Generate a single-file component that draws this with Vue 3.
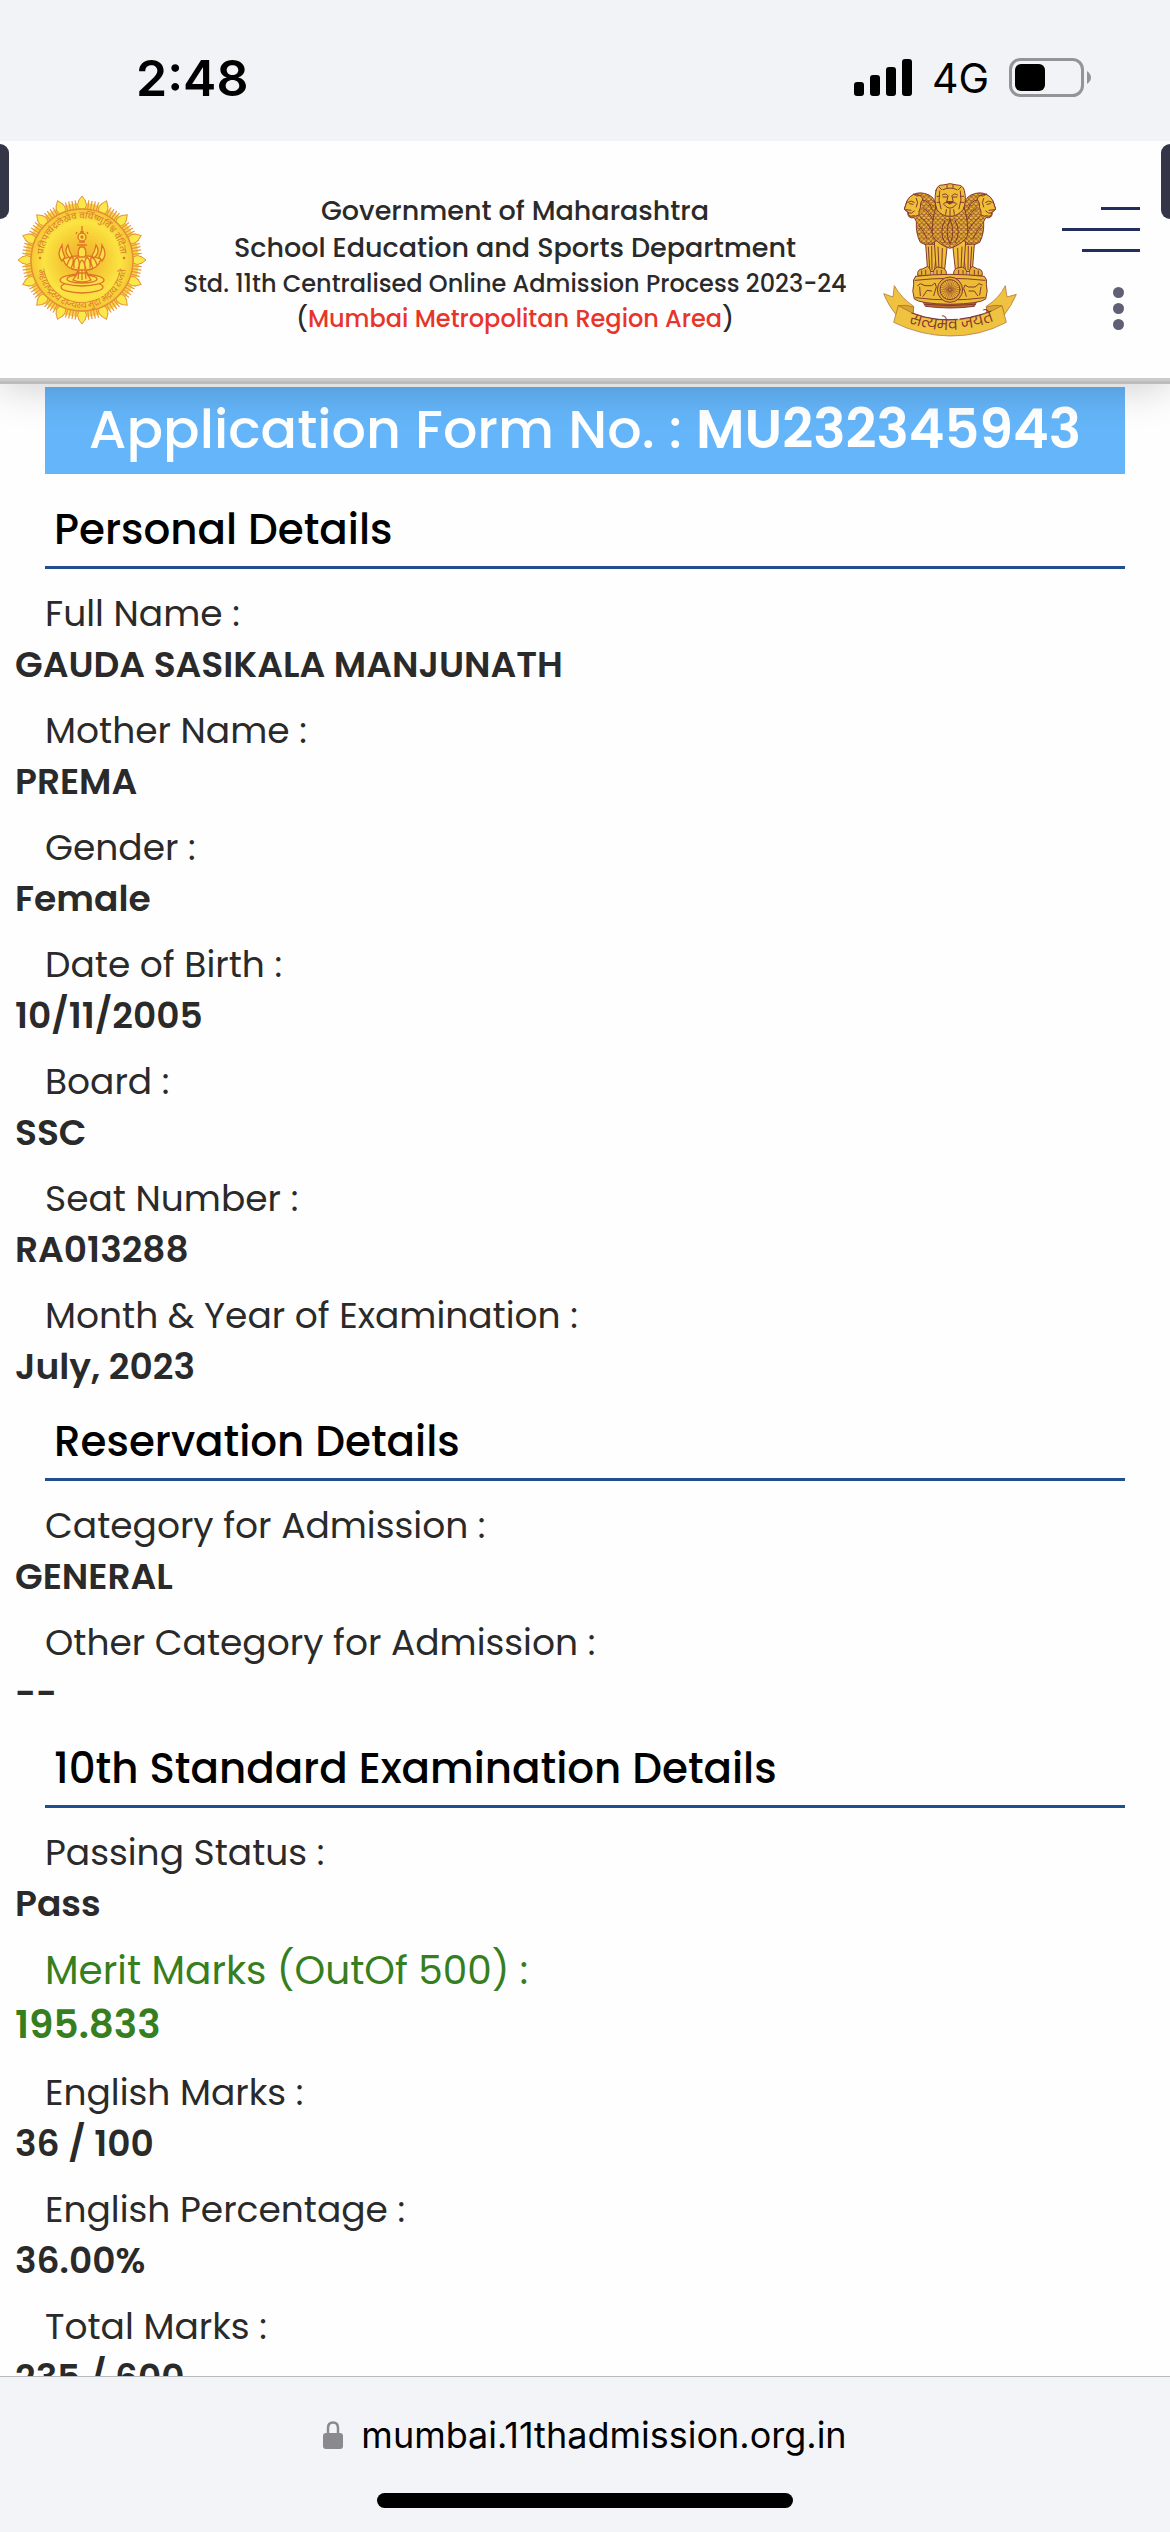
<script setup>
import { ref } from 'vue'

const applicationNo = ref('MU232345943')

// every block of the form with its label / value pairs
const sections = ref([
  {
    title: 'Personal Details',
    fields: [
      { label: 'Full Name', value: 'GAUDA SASIKALA MANJUNATH' },
      { label: 'Mother Name', value: 'PREMA' },
      { label: 'Gender', value: 'Female' },
      { label: 'Date of Birth', value: '10/11/2005' },
      { label: 'Board', value: 'SSC' },
      { label: 'Seat Number', value: 'RA013288' },
      { label: 'Month & Year of Examination', value: 'July, 2023' },
    ],
  },
  {
    title: 'Reservation Details',
    fields: [
      { label: 'Category for Admission', value: 'GENERAL' },
      { label: 'Other Category for Admission', value: '--' },
    ],
  },
  {
    title: '10th Standard Examination Details',
    fields: [
      { label: 'Passing Status', value: 'Pass' },
      { label: 'Merit Marks (OutOf 500)', value: '195.833', merit: true },
      { label: 'English Marks', value: '36 / 100' },
      { label: 'English Percentage', value: '36.00%' },
      { label: 'Total Marks', value: '235 / 600' },
    ],
  },
])

// angles for the petals and the rays of the state seal
const petals = Array.from({ length: 16 }, (_, i) => i * 22.5)
const rays = Array.from({ length: 112 }, (_, i) => (i * 360) / 112)
const spokes = Array.from({ length: 24 }, (_, i) => i * 15)
</script>

<template>
  <div class="phone">
    <div class="status-bar">
      <span class="clock">2:48</span>
      <div class="status-icons">
        <svg class="signal" viewBox="0 0 58 37">
          <rect x="0" y="23" width="10" height="14" rx="3" />
          <rect x="16" y="16" width="10" height="21" rx="3" />
          <rect x="32" y="8" width="10" height="29" rx="3" />
          <rect x="48" y="0" width="10" height="37" rx="3" />
        </svg>
        <span class="network">4G</span>
        <svg class="battery" viewBox="0 0 82 39">
          <rect x="1.5" y="1.5" width="72" height="36" rx="10" fill="none" stroke="#939498" stroke-width="3" />
          <rect x="6" y="6" width="30" height="27" rx="6" />
          <path d="M78 13 Q82 16 82 19.500 Q82 23 78 26 Z" fill="#939498" />
        </svg>
      </div>
    </div>

    <header>
      <div class="side-tab left"></div>
      <div class="side-tab right"></div>

      <svg class="seal" viewBox="-65 -65 130 130">
        <defs>
          <radialGradient id="seal-gold">
            <stop offset="0" stop-color="#efa92c" />
            <stop offset="0.45" stop-color="#f6cb35" />
            <stop offset="0.75" stop-color="#fbe442" />
            <stop offset="1" stop-color="#f6c733" />
          </radialGradient>
          <path id="seal-top" d="M-38.500 -3 A38.500 38.500 0 0 1 38.500 -3" />
          <path id="seal-bottom" d="M-44 4 A44 44 0 0 0 44 4" />
        </defs>
        <circle r="57" fill="#f8d544" />
        <path v-for="a in rays" :key="a" :transform="`rotate(${a})`" d="M0 -51 L0 -60" stroke="#e9963c" stroke-width="1.200" />
        <path
          v-for="a in petals"
          :key="'p' + a"
          :transform="`rotate(${a})`"
          d="M0 -64 L-3 -60 Q-6 -55 -3 -51 H3 Q6 -55 3 -60 Z"
          fill="#fbe84a"
          stroke="#e9963c"
        />
        <circle r="51" fill="url(#seal-gold)" stroke="#e58f35" stroke-width="1.500" />
        <g class="seal-text">
          <text><textPath href="#seal-top" startOffset="50%">प्रतिपच्चंद्रलेखेव वर्धिष्णुर्विश्व वंदिता</textPath></text>
          <text><textPath href="#seal-bottom" startOffset="50%">महाराष्ट्रस्य राज्यस्य मुद्रा भद्राय राजते</textPath></text>
        </g>
        <circle cx="-42" cy="-2" r="1.300" fill="#df7b2e" />
        <circle cx="42" cy="-2" r="1.300" fill="#df7b2e" />
        <g fill="#fbe04a" stroke="#df7425" stroke-width="1.300">
          <ellipse cy="27" rx="21" ry="6" />
          <ellipse cy="20" rx="22" ry="6" />
          <ellipse cy="19" rx="15" ry="4" />
          <path d="M-4 9 H4 L5 14 L9 20 Q0 24 -9 20 L-5 14 Z" />
          <path d="M-6 13 H6 M-3 10 L-4 19 M0 10 V20 M3 10 L4 19" />
          <path d="M-19 -1 Q0 -8 19 -1 Q16 9 5 10 H-5 Q-16 9 -19 -1 Z" />
          <path d="M-20 1 Q-26 -6 -20 -15 Q-20 -8 -17 -3 Z M20 1 Q26 -6 20 -15 Q20 -8 17 -3 Z" />
          <path d="M-12 -2 Q-19 -8 -14 -15 Q-13 -9 -10 -4 Z M12 -2 Q19 -8 14 -15 Q13 -9 10 -4 Z" />
          <path d="M-15 5 Q-13 -2 -9 -3 Q-8 3 -11 8 M-8 8 Q-9 0 -5 -3 Q-1 2 -4 9 M15 5 Q13 -2 9 -3 Q8 3 11 8 M8 8 Q9 0 5 -3 Q1 2 4 9 M-3 9 Q-3 2 0 0 Q3 2 3 9" />
          <path d="M-3 -3 Q-5 -9 -2 -13 H2 Q5 -9 3 -3 Z" />
          <path d="M-5 -15 H5 M-3 -18 H3" />
          <circle cy="-23" r="4" />
          <circle cy="-23" r="1" />
          <path d="M-6 -26 L-5 -28 M6 -26 L5 -28 M-2 -28 H2 M0 -28 V-34" />
        </g>
      </svg>

      <div class="heading">
        <p>Government of Maharashtra</p>
        <p>School Education and Sports Department</p>
        <p class="small">Std. 11th Centralised Online Admission Process 2023-24</p>
        <p class="small">(<span class="region">Mumbai Metropolitan Region Area</span>)</p>
      </div>

      <svg class="emblem" viewBox="38 38 402 462">
        <defs>
          <pattern id="mane" width="14" height="14" patternUnits="userSpaceOnUse">
            <rect width="14" height="14" fill="#e9b635" />
            <path d="M0 0 Q0 8 7 8 Q14 8 14 0 M-7 7 Q-7 15 0 15 Q7 15 7 7 Q7 15 14 15 Q21 15 21 7" fill="none" stroke="#8c4a2e" stroke-width="2.500" />
          </pattern>
          <path id="motto" d="M96 450 Q238 510 390 444" />
          <g id="lion-half">
            <!-- outer body and head seen from the side -->
            <path d="M130 72 Q150 62 176 74 Q196 84 196 110 L206 160 L198 214 L172 226 L150 216 Q136 190 138 154 L132 142 Q112 146 112 126 L102 116 L110 92 Z" fill="url(#mane)" />
            <path d="M130 72 Q150 70 158 86 Q148 98 150 112 Q144 124 146 134 Q134 140 130 136 Q114 142 114 126 L102 117 L110 92 Q116 78 130 72 Z" fill="#efbf38" />
            <path d="M112 96 Q124 88 132 96 M118 100 L128 102 M106 118 L122 120 M114 128 Q124 132 132 122 M138 84 Q146 96 138 110 M130 72 Q138 80 150 76" fill="none" />
            <path d="M156 88 Q178 92 186 118 M158 112 Q176 124 188 148 M150 140 Q168 152 186 184 M146 166 Q160 180 170 206" fill="none" />
            <!-- legs -->
            <path d="M166 222 L172 302 L192 304 L202 224 Z" fill="#efbf38" />
            <path d="M192 214 L198 302 L222 306 L230 232 L206 210 Z" fill="#efbf38" />
            <path d="M174 230 L178 296 M184 228 L185 298 M203 230 L206 300 M216 234 L214 300" fill="none" />
            <path d="M142 314 Q140 296 156 296 L172 288 Q182 294 182 314 Z" fill="#e4b135" />
            <path d="M188 314 Q186 296 202 290 L220 294 Q230 300 228 314 Z" fill="#e4b135" />
            <path d="M154 312 V302 M166 312 V300 M200 312 V300 M213 312 V300" fill="none" />
          </g>
        </defs>
        <g stroke="#85392f" stroke-width="3" stroke-linejoin="round" stroke-linecap="round">
          <use href="#lion-half" />
          <use href="#lion-half" transform="translate(478 0) scale(-1 1)" />
          <path d="M196 112 Q184 150 186 196 Q202 222 239 234 Q276 222 292 196 Q294 150 282 112 Z" fill="url(#mane)" />
          <path d="M239 146 Q222 184 239 222 Q256 184 239 146 M224 150 Q204 184 224 218 M254 150 Q274 184 254 218" fill="none" />
          <path d="M197 60 Q202 42 218 44 Q239 36 260 44 Q278 44 282 60 Q290 92 278 118 Q262 138 239 138 Q214 138 200 118 Q190 92 197 60 Z" fill="#edbd38" />
          <path d="M208 62 Q202 90 212 116 M270 62 Q276 90 266 116 M218 58 Q239 48 260 58 M214 58 L206 50 M264 58 L272 50 M230 52 V44 M248 52 V44 M200 78 H208 M200 96 H208 M270 78 H280 M270 96 H280" fill="none" />
          <path d="M216 74 Q226 66 233 76 M262 74 Q252 66 245 76 M218 80 H230 M248 80 H260 M233 78 L229 94 H249 L245 78 M218 102 Q226 92 239 100 Q252 92 260 102 M222 104 Q239 124 256 104 M228 118 L226 132 M239 118 V136 M250 118 L252 132" fill="none" />
          <path d="M230 94 H248 L239 101 Z" fill="#85392f" />

          <!-- abacus with the wheel -->
          <path d="M158 392 H320 L312 408 Q239 418 166 408 Z" fill="#b66d30" />
          <path d="M136 318 Q239 306 342 318 Q352 328 348 342 Q354 362 346 386 Q330 400 239 402 Q148 400 132 386 Q124 362 130 342 Q126 328 136 318 Z" fill="#edbc37" />
          <path d="M134 330 Q239 318 344 330 M136 382 Q239 396 342 382 M164 402 Q239 410 314 402" fill="none" />
          <path d="M142 346 L150 340 L164 346 H184 L194 338 L198 350 L190 376 M184 362 L170 360 L158 378 M148 350 L150 376 M336 344 L326 340 L314 350 H294 L284 344 L280 354 L288 378 M296 362 H312 L322 376 M332 350 L328 374" fill="none" />
          <circle cx="239" cy="358" r="38" fill="#e0a933" />
          <circle cx="239" cy="358" r="30" fill="#e9b635" />
          <path v-for="a in spokes" :key="a" :transform="`rotate(${a} 239 358)`" d="M239 354 V330" stroke-width="1.500" />
        </g>
        <!-- ribbon -->
        <g fill="#efc23f" stroke="#a5652f" stroke-width="2" stroke-linejoin="round">
          <path d="M72 346 Q92 382 130 408 L128 430 L84 408 L80 436 Q54 406 40 370 L68 380 Z" />
          <path d="M405 346 Q388 382 348 408 L350 430 L396 408 L400 436 Q424 406 438 372 L410 380 Z" />
          <path d="M84 406 Q98 424 128 430 L130 410 Q108 402 84 406 Z M395 406 Q380 424 350 430 L348 410 Q372 402 395 406 Z" fill="#d9a334" />
          <path d="M84 406 Q160 452 239 450 Q320 450 395 406 L408 456 Q330 498 239 497 Q150 496 70 456 Z" />
        </g>
        <text class="motto"><textPath href="#motto" startOffset="50%">सत्यमेव  जयते</textPath></text>
      </svg>

      <div class="actions">
        <button class="menu" aria-label="Menu">
          <span></span>
          <span></span>
          <span></span>
        </button>
        <button class="more" aria-label="More">
          <span></span>
          <span></span>
          <span></span>
        </button>
      </div>
    </header>

    <main>
      <h1>Application Form No. : <strong>{{ applicationNo }}</strong></h1>

      <section v-for="section in sections" :key="section.title">
        <h2>{{ section.title }}</h2>
        <dl>
          <div v-for="field in section.fields" :key="field.label" class="field" :class="{ merit: field.merit }">
            <dt>{{ field.label }} :</dt>
            <dd>{{ field.value }}</dd>
          </div>
        </dl>
      </section>
    </main>

    <footer>
      <button class="address">
        <svg class="lock" viewBox="0 0 20 28">
          <path d="M5 13 V7 Q5 1.500 10 1.500 Q15 1.500 15 7 V13" fill="none" stroke="#8a898e" stroke-width="2.500" />
          <rect x="0" y="12" width="20" height="16" rx="3" fill="#8a898e" />
        </svg>
        mumbai.11thadmission.org.in
      </button>
      <div class="home-bar"></div>
    </footer>
  </div>
</template>

<style>
body {
  background: #fff;
}
</style>

<style scoped>
.phone {
  display: flex;
  flex-direction: column;
  height: 100vh;
  overflow: hidden;
  background: #fefefe;
  color: #2a2a2a;
  font-family: Poppins, Inter, sans-serif;
}

button {
  border: none;
  padding: 0;
  background: none;
  font-family: inherit;
}

.status-bar {
  position: relative;
  z-index: 2;
  display: flex;
  justify-content: space-between;
  align-items: center;
  height: 141px;
  padding: 14px 79px 0 136px;
  box-sizing: border-box;
  flex-shrink: 0;
  background: #f2f3f7;
  color: #000;
  font-family: Inter, sans-serif;
}

.clock {
  font-size: 50px;
  font-weight: 600;
}

.status-icons {
  display: flex;
  align-items: center;
  gap: 20px;
}

.signal {
  width: 58px;
  height: 37px;
}

.network {
  font-size: 41px;
}

.battery {
  width: 82px;
  height: 39px;
}

header {
  position: relative;
  z-index: 1;
  display: flex;
  align-items: center;
  flex-shrink: 0;
  height: 237px;
  padding: 0 30px 0 17px;
  background: #fefefe;
  border-bottom: 3px solid #cbcbcb;
  box-shadow: 0 3px 0 #bdbdbd, 0 6px 40px rgba(0, 0, 0, 0.2);
}

/* dark tabs that peek in from both edges */
.side-tab {
  position: absolute;
  top: 3px;
  width: 9px;
  height: 75px;
  background: #343546;
}

.side-tab.left {
  left: 0;
  border-radius: 0 9px 9px 0;
}

.side-tab.right {
  right: 0;
  border-radius: 9px 0 0 9px;
}

.seal {
  width: 130px;
  height: 130px;
}

.seal-text {
  fill: #dc7d30;
  font-size: 8px;
  font-weight: 500;
  text-anchor: middle;
}

.heading {
  flex: 1;
  padding-top: 8px;
  text-align: center;
}

.heading p {
  margin: 0;
  font-size: 27px;
  font-weight: 500;
  line-height: 37px;
}

.heading .small {
  font-size: 24px;
  line-height: 35px;
}

.region {
  color: #e7352b;
}

.emblem {
  width: 134px;
  height: 154px;
}

.motto {
  fill: #85392f;
  font-size: 44px;
  font-weight: 400;
  text-anchor: middle;
  white-space: pre;
}

.actions {
  display: flex;
  flex-direction: column;
  align-items: flex-end;
  gap: 35px;
  width: 123px;
  padding-top: 18px;
}

.menu {
  display: flex;
  flex-direction: column;
  align-items: flex-end;
  gap: 18px;
  width: 78px;
}

.menu span {
  width: 100%;
  height: 3px;
  background: #242e5e;
}

.menu span:first-child {
  width: 50%;
}

.menu span:last-child {
  width: 75%;
}

.more {
  display: flex;
  flex-direction: column;
  gap: 5px;
  margin-right: 16px;
}

.more span {
  width: 11px;
  height: 11px;
  border-radius: 50%;
  background: #5f6078;
}

main {
  flex: 1;
  min-height: 0;
  overflow: hidden;
  padding-top: 6px;
}

h1 {
  margin: 0 45px 6px;
  padding-bottom: 3px;
  background: #64b5f9;
  color: #fff;
  font-size: 54px;
  font-weight: 500;
  line-height: 84px;
  text-align: center;
}

h1 strong {
  font-weight: 600;
}

h2 {
  margin: 0 45px;
  padding: 26px 9px 12px;
  border-bottom: 3px solid #214e90;
  color: #000;
  font-size: 42px;
  font-weight: 500;
  line-height: 48px;
}

dl {
  margin: 0;
  padding-top: 4px;
}

.field {
  padding: 15px 15px 0;
  font-size: 36px;
  line-height: 51px;
}

dt {
  padding-left: 30px;
}

dd {
  margin: 0;
  font-weight: 600;
}

.merit {
  color: #367e20;
  font-size: 39px;
  line-height: 54px;
}

footer {
  display: flex;
  flex-direction: column;
  align-items: center;
  justify-content: space-between;
  flex-shrink: 0;
  height: 156px;
  padding: 36px 0 24px;
  box-sizing: border-box;
  border-top: 1px solid #b9babe;
  background: #f3f4f8;
}

.address {
  display: flex;
  align-items: center;
  gap: 18px;
  color: #000;
  font-family: Inter, sans-serif;
  font-size: 36px;
  line-height: 44px;
}

.lock {
  width: 20px;
  height: 28px;
}

.home-bar {
  width: 416px;
  height: 15px;
  border-radius: 8px;
  background: #000;
}
</style>
